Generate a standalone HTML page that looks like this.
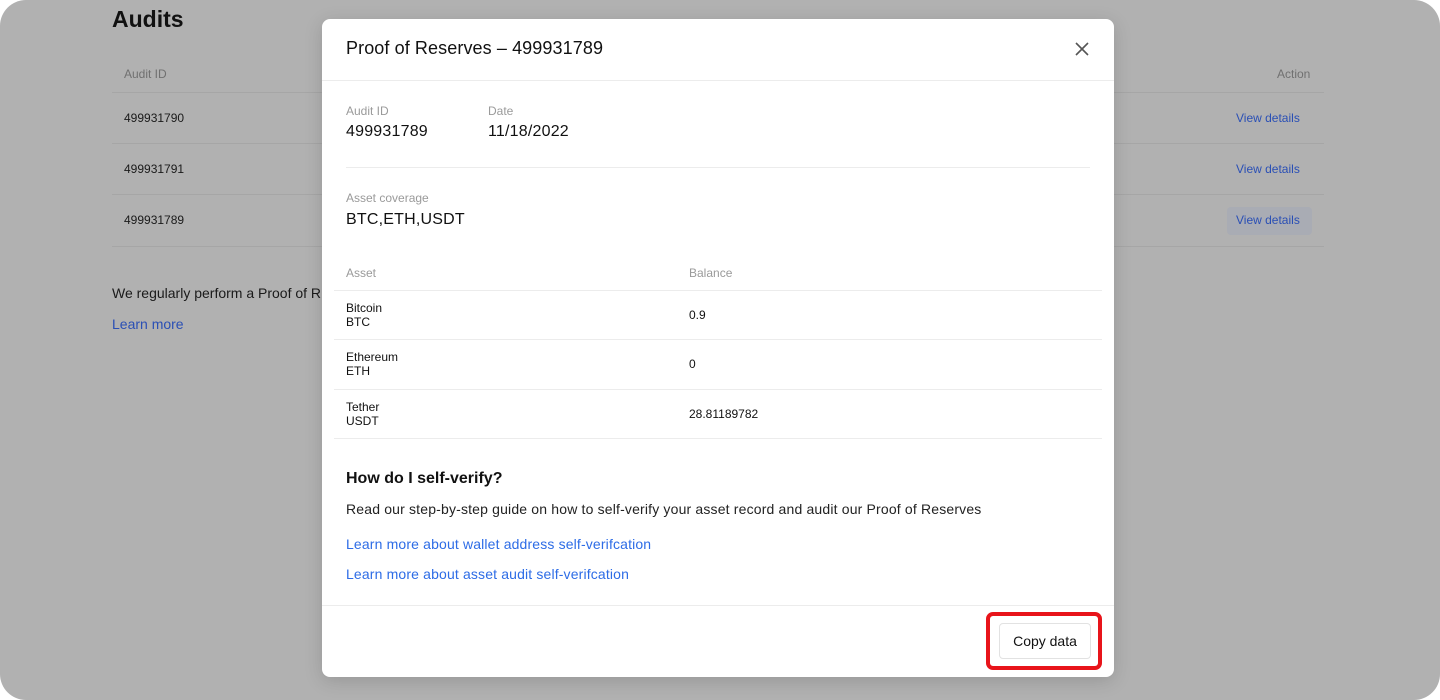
<!DOCTYPE html>
<html><head><meta charset="utf-8"><style>
*{margin:0;padding:0;box-sizing:border-box}
body{width:1440px;height:700px;background:#fff;font-family:"Liberation Sans","DejaVu Sans",sans-serif;overflow:hidden;position:relative}
.bg{position:absolute;left:0;top:0;width:1440px;height:700px;background:#b1b1b1;border-radius:26px;overflow:hidden}
.a{position:absolute;white-space:nowrap}
.line{position:absolute;height:1px;background:#a6a6a6}
.modal{position:absolute;left:322px;top:19px;width:792px;height:658px;background:#fff;border-radius:8px;box-shadow:0 4px 18px rgba(0,0,0,.15)}
.m{position:absolute;white-space:nowrap}
.ml{position:absolute;height:1px;background:#ececec}
.lbl{font-size:12px;color:#9a9a9a}
.big{font-size:16px;color:#111;letter-spacing:0.2px}
.sm{font-size:12px;color:#111;line-height:14px}
.lnk{font-size:14px;color:#2d6ce6;letter-spacing:0.15px}
.ttl{letter-spacing:0.1px}
</style></head><body>
<div class="bg">
  <div class="a" style="left:112px;top:6px;font-size:23px;font-weight:bold;color:#111">Audits</div>
  <div class="a" style="left:124px;top:67px;font-size:12px;color:#707070">Audit ID</div>
  <div class="a" style="left:1277px;top:67px;font-size:12px;color:#707070">Action</div>
  <div class="line" style="left:112px;top:92px;width:1212px"></div>
  <div class="a" style="left:124px;top:111px;font-size:12px;color:#1a1a1a">499931790</div>
  <div class="a" style="left:1236px;top:111px;font-size:12px;color:#2a4fb5">View details</div>
  <div class="line" style="left:112px;top:143px;width:1212px"></div>
  <div class="a" style="left:124px;top:162px;font-size:12px;color:#1a1a1a">499931791</div>
  <div class="a" style="left:1236px;top:162px;font-size:12px;color:#2a4fb5">View details</div>
  <div class="line" style="left:112px;top:194px;width:1212px"></div>
  <div class="a" style="left:1227px;top:207px;width:85px;height:28px;background:#a9acb4;border-radius:4px"></div>
  <div class="a" style="left:124px;top:213px;font-size:12px;color:#1a1a1a">499931789</div>
  <div class="a" style="left:1236px;top:213px;font-size:12px;color:#2a4fb5">View details</div>
  <div class="line" style="left:112px;top:246px;width:1212px"></div>
  <div class="a" style="left:112px;top:285px;font-size:14px;color:#1a1a1a">We regularly perform a Proof of R</div>
  <div class="a" style="left:112px;top:316px;font-size:14px;color:#2a4fb5">Learn more</div>
</div>
<div class="modal">
  <div class="m ttl" style="left:24px;top:19px;font-size:18px;color:#111">Proof of Reserves – 499931789</div>
  <svg class="m" style="left:752px;top:22px" width="16" height="16" viewBox="0 0 16 16"><path d="M2 2L14 14M14 2L2 14" stroke="#555" stroke-width="1.6"/></svg>
  <div class="ml" style="left:0;top:61px;width:792px"></div>
  <div class="m lbl" style="left:24px;top:85px">Audit ID</div>
  <div class="m big" style="left:24px;top:104px">499931789</div>
  <div class="m lbl" style="left:166px;top:85px">Date</div>
  <div class="m big" style="left:166px;top:104px">11/18/2022</div>
  <div class="ml" style="left:24px;top:148px;width:744px"></div>
  <div class="m lbl" style="left:24px;top:172px">Asset coverage</div>
  <div class="m big" style="left:24px;top:192px">BTC,ETH,USDT</div>
  <div class="m lbl" style="left:24px;top:247px">Asset</div>
  <div class="m lbl" style="left:367px;top:247px">Balance</div>
  <div class="ml" style="left:12px;top:271px;width:768px"></div>
  <div class="m sm" style="left:24px;top:282px">Bitcoin<br>BTC</div>
  <div class="m sm" style="left:367px;top:289px">0.9</div>
  <div class="ml" style="left:12px;top:320px;width:768px"></div>
  <div class="m sm" style="left:24px;top:331px">Ethereum<br>ETH</div>
  <div class="m sm" style="left:367px;top:338px">0</div>
  <div class="ml" style="left:12px;top:370px;width:768px"></div>
  <div class="m sm" style="left:24px;top:381px">Tether<br>USDT</div>
  <div class="m sm" style="left:367px;top:388px">28.81189782</div>
  <div class="ml" style="left:12px;top:419px;width:768px"></div>
  <div class="m" style="left:24px;top:451px;font-size:16px;font-weight:bold;color:#111">How do I self-verify?</div>
  <div class="m" style="left:24px;top:482px;font-size:14px;color:#222;letter-spacing:0.17px">Read our step-by-step guide on how to self-verify your asset record and audit our Proof of Reserves</div>
  <div class="m lnk" style="left:24px;top:517px">Learn more about wallet address self-verifcation</div>
  <div class="m lnk" style="left:24px;top:547px">Learn more about asset audit self-verifcation</div>
  <div class="ml" style="left:0;top:586px;width:792px"></div>
  <div class="m" style="left:664px;top:593px;width:116px;height:58px;border:4px solid #e8141a;border-radius:7px"></div>
  <div class="m" style="left:677px;top:604px;width:92px;height:36px;border:1px solid #e2e2e2;border-radius:4px;font-size:14px;color:#111;text-align:center;line-height:34px">Copy data</div>
</div>
</body></html>
